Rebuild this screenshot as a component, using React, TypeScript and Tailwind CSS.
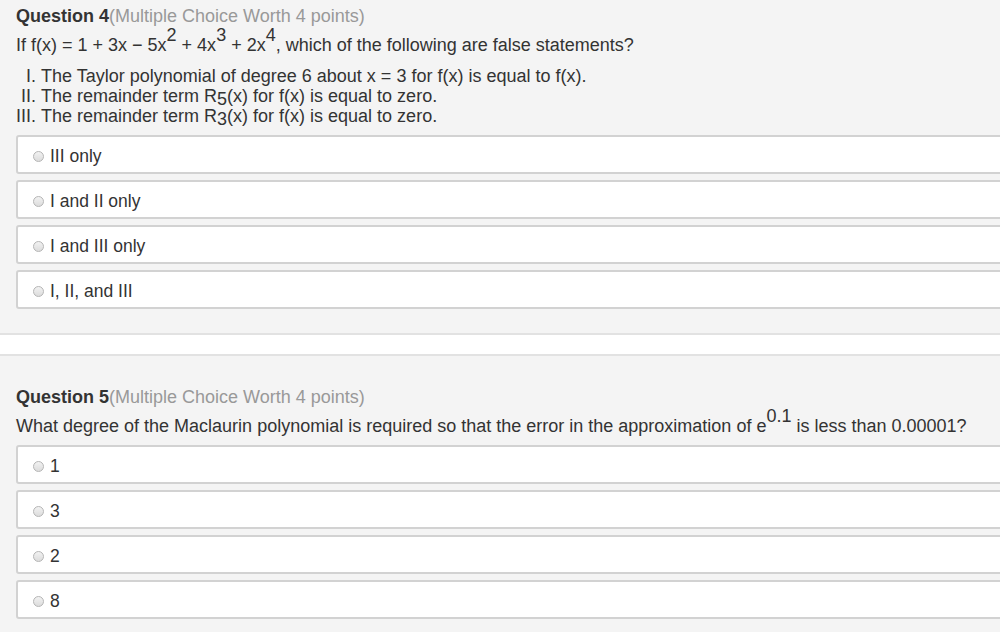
const font = { fontFamily: '"Helvetica Neue", Helvetica, "Liberation Sans", Arial, sans-serif' };

type Choice = { id: string; label: string };

function Radio() {
  return (
    <span className="inline-block w-[11px] h-[11px] rounded-full border border-[#b5b5b5] bg-gradient-to-b from-[#f2f2f2] to-[#dcdcdc] shrink-0" />
  );
}

function ChoiceBox({ label }: { label: string }) {
  return (
    <div className="-mr-3 h-[39px] flex items-center gap-[6px] pl-[15px] pt-[3px] bg-white border-2 border-[#d2d2d2] rounded-[3px]">
      <Radio />
      <span className="text-[17.5px] text-[#333]">{label}</span>
    </div>
  );
}

function Header({ num }: { num: number }) {
  return (
    <div className="text-[18px] leading-[20px]">
      <span className="font-bold text-[#333]">Question {num}</span>
      <span className="text-[#999]">(Multiple Choice Worth 4 points)</span>
    </div>
  );
}

const q4Choices: Choice[] = [
  { id: 'a', label: 'III only' },
  { id: 'b', label: 'I and II only' },
  { id: 'c', label: 'I and III only' },
  { id: 'd', label: 'I, II, and III' },
];

const q5Choices: Choice[] = [
  { id: 'a', label: '1' },
  { id: 'b', label: '3' },
  { id: 'c', label: '2' },
  { id: 'd', label: '8' },
];

const sup = 'text-[18px] -top-[10px]';
const sub = 'text-[18px] -bottom-[3px]';

const statements = [
  { n: 'I.', text: <>The Taylor polynomial of degree 6 about x = 3 for f(x) is equal to f(x).</> },
  { n: 'II.', text: <>The remainder term R<sub className={sub}>5</sub>(x) for f(x) is equal to zero.</> },
  { n: 'III.', text: <>The remainder term R<sub className={sub}>3</sub>(x) for f(x) is equal to zero.</> },
];

export default function App() {
  return (
    <div style={font} className="w-[1000px] h-[632px] overflow-hidden bg-[#f4f4f4] text-[#333]">
      <section className="pl-4 pt-[6px] pb-[24px]">
        <Header num={4} />
        <p className="mt-[9px] text-[18px] leading-[20px]">
          If f(x) = 1 + 3x &minus; 5x<sup className={sup}>2</sup> + 4x<sup className={sup}>3</sup> + 2x<sup className={sup}>4</sup>, which of the following are false statements?
        </p>
        <ol className="mt-[11px] text-[18px] leading-[20px]">
          {statements.map((s) => (
            <li key={s.n} className="flex">
              <span className="w-[20px] text-right shrink-0">{s.n}</span>
              <span className="pl-[5px]">{s.text}</span>
            </li>
          ))}
        </ol>
        <div className="mt-[9px] flex flex-col gap-[6px]">
          {q4Choices.map((c) => (
            <ChoiceBox key={c.id} label={c.label} />
          ))}
        </div>
      </section>
      <div className="h-[23px] bg-white border-y-2 border-[#e2e2e2]" />
      <section className="pl-4 pt-[31px]">
        <Header num={5} />
        <p className="mt-[9px] text-[18px] leading-[20px]">
          What degree of the Maclaurin polynomial is required so that the error in the approximation of e<sup className={sup}>0.1</sup> is less than 0.00001?
        </p>
        <div className="mt-[9px] flex flex-col gap-[6px]">
          {q5Choices.map((c) => (
            <ChoiceBox key={c.id} label={c.label} />
          ))}
        </div>
      </section>
    </div>
  );
}
